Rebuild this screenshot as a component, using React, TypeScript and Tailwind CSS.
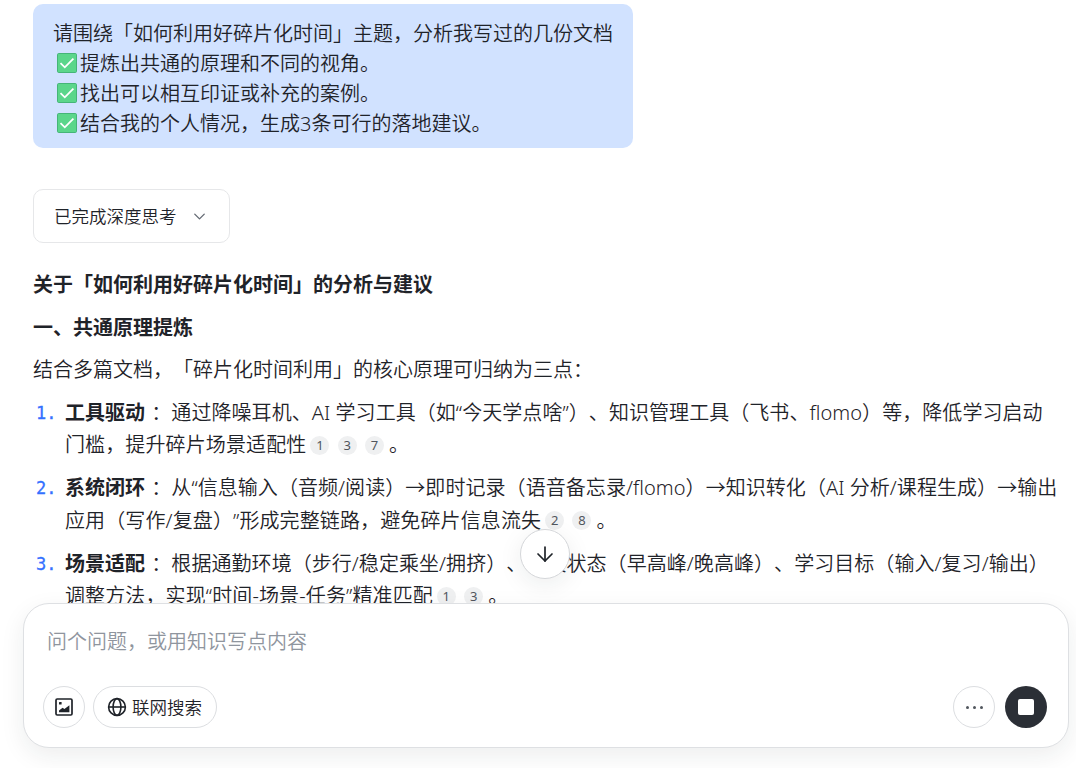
import type { ReactNode } from 'react'
import { ArrowDown, ChevronDown } from 'lucide-react'

interface Principle {
  title: string
  lines: [string, string]
  refs: number[]
}

const tasks = [
  '提炼出共通的原理和不同的视角。',
  '找出可以相互印证或补充的案例。',
  '结合我的个人情况，生成3条可行的落地建议。',
]

const principles: Principle[] = [
  {
    title: '工具驱动',
    lines: [
      '通过降噪耳机、AI 学习工具（如“今天学点啥”）、知识管理工具（飞书、flomo）等，降低学习启动',
      '门槛，提升碎片场景适配性',
    ],
    refs: [1, 3, 7],
  },
  {
    title: '系统闭环',
    lines: [
      '从“信息输入（音频/阅读）→即时记录（语音备忘录/flomo）→知识转化（AI 分析/课程生成）→输出',
      '应用（写作/复盘）”形成完整链路，避免碎片信息流失',
    ],
    refs: [2, 8],
  },
  {
    title: '场景适配',
    lines: [
      '根据通勤环境（步行/稳定乘坐/拥挤）、时段状态（早高峰/晚高峰）、学习目标（输入/复习/输出）',
      '调整方法，实现“时间-场景-任务”精准匹配',
    ],
    refs: [1, 3],
  },
]

function CheckMark() {
  return (
    <svg viewBox="0 0 20 20" className="mr-[3px] mb-0.5 ml-1 h-5 w-5 shrink-0" role="img" aria-label="✅">
      <rect x="0.5" y="0.5" width="19" height="19" rx="1.2" fill="#5bd68b" stroke="#45b578" />
      <path d="M3.5 10.2 7.8 14.3 16.4 5.6" fill="none" stroke="#fff" strokeWidth="1.8" />
    </svg>
  )
}

function ImageIcon() {
  return (
    <svg viewBox="0 0 18 18" className="h-[18px] w-[18px]" fill="none">
      <rect x="1" y="1" width="16" height="16" rx="1.2" stroke="#1f2329" strokeWidth="1.7" />
      <rect x="4" y="4" width="2.6" height="2.6" rx="0.5" fill="#1f2329" />
      <path d="M4 14.2v-1.8l3.6-2.6 1.8 1.3 5-3.9v7z" fill="#1f2329" />
    </svg>
  )
}

function GlobeIcon() {
  return (
    <svg viewBox="0 0 20 20" className="h-5 w-5" fill="none" stroke="#1f2329" strokeWidth="1.6">
      <circle cx="10" cy="10" r="8.4" />
      <ellipse cx="10" cy="10" rx="3.9" ry="8.4" />
      <path d="M1.6 10h16.8" />
    </svg>
  )
}

function Citation({ children }: { children: ReactNode }) {
  return (
    <span className="flex h-[19px] w-[19px] items-center justify-center rounded-full bg-[#eff0f1] text-[13px] leading-none font-normal text-[#51565d]">
      {children}
    </span>
  )
}

export default function App() {
  return (
    <div className="relative h-[768px] w-[1076px] overflow-hidden bg-white font-['Noto_Sans','Noto_Sans_CJK_SC',sans-serif] text-[20px] font-[350] whitespace-nowrap text-[#1f2329] [text-spacing-trim:space-all]">
      <main className="px-[33px] pt-[4px]">
        <div className="h-[144px] w-[600px] rounded-[10px] bg-[#d1e2ff] px-5 pt-[15px] leading-[30px]">
          <p>请围绕「如何利用好碎片化时间」主题，分析我写过的几份文档</p>
          {tasks.map((task) => (
            <p key={task} className="flex items-center">
              <CheckMark />
              {task}
            </p>
          ))}
        </div>

        <button className="mt-[41px] flex h-[54px] w-[197px] items-center rounded-[10px] border border-[#e6e7e9] pl-5 text-[17.5px]">
          已完成深度思考
          <ChevronDown className="ml-[13px] h-[19px] w-[19px] text-[#646a73]" strokeWidth={1.7} />
        </button>

        <h1 className="mt-[26px] leading-8 font-bold">关于「如何利用好碎片化时间」的分析与建议</h1>
        <h2 className="mt-[11px] leading-8 font-bold">一、共通原理提炼</h2>
        <p className="mt-[10px] leading-8">结合多篇文档，「碎片化时间利用」的核心原理可归纳为三点：</p>

        <ol className="mt-[11px] flex flex-col gap-[11px] leading-[32.2px] tracking-[0.06px]">
          {principles.map((item, i) => (
            <li key={item.title} className="flex">
              <span className="w-8 shrink-0 pl-[3px] font-['DejaVu_Sans_Mono',monospace] text-[17px] text-[#3370ff] [-webkit-text-stroke:0.3px]">{i + 1}.</span>
              <div>
                <p><strong className="mr-px font-bold tracking-normal">{item.title}</strong> ：{item.lines[0]}</p>
                <p className="flex items-center tracking-[0.12px]">
                  {item.lines[1]}
                  <span className="mr-[5px] ml-1 flex gap-[8.3px]">
                    {item.refs.map((ref) => <Citation key={ref}>{ref}</Citation>)}
                  </span>
                  。
                </p>
              </div>
            </li>
          ))}
        </ol>
      </main>

      <button aria-label="Scroll to bottom" className="absolute top-[529px] left-[520px] flex h-[50px] w-[50px] items-center justify-center rounded-full border border-[#d5d7da] bg-white shadow-[0_6px_24px_rgba(31,35,41,0.08)]">
        <ArrowDown className="h-6 w-6" strokeWidth={1.7} />
      </button>

      <section className="absolute top-[603px] left-[23px] flex h-[145px] w-[1046px] flex-col justify-between rounded-[26px] border border-[#dee0e3] bg-white px-[19px] pt-[22px] pb-[19px] shadow-[0_8px_24px_rgba(31,35,41,0.08)]">
        <p className="pl-1 leading-8 text-[#8f959e]">问个问题，或用知识写点内容</p>
        <div className="flex items-center">
          <button aria-label="Image" className="flex h-[42px] w-[42px] items-center justify-center rounded-full border border-[#dcdee1]">
            <ImageIcon />
          </button>
          <button className="ml-2 flex h-[42px] w-[124px] items-center gap-[5px] rounded-full border border-[#dcdee1] pl-[13px] text-[17.5px]">
            <GlobeIcon />
            联网搜索
          </button>
          <button aria-label="More" className="ml-auto flex h-[42px] w-[42px] items-center justify-center gap-1 rounded-full border border-[#dcdee1]">
            <span className="h-[3px] w-[3px] rounded-full bg-[#51565d]" />
            <span className="h-[3px] w-[3px] rounded-full bg-[#51565d]" />
            <span className="h-[3px] w-[3px] rounded-full bg-[#51565d]" />
          </button>
          <button aria-label="Stop" className="mr-0.5 ml-2.5 flex h-[42px] w-[42px] items-center justify-center rounded-full bg-[#2b2f36]">
            <span className="h-4 w-4 rounded-[2px] bg-white" />
          </button>
        </div>
      </section>
    </div>
  )
}
